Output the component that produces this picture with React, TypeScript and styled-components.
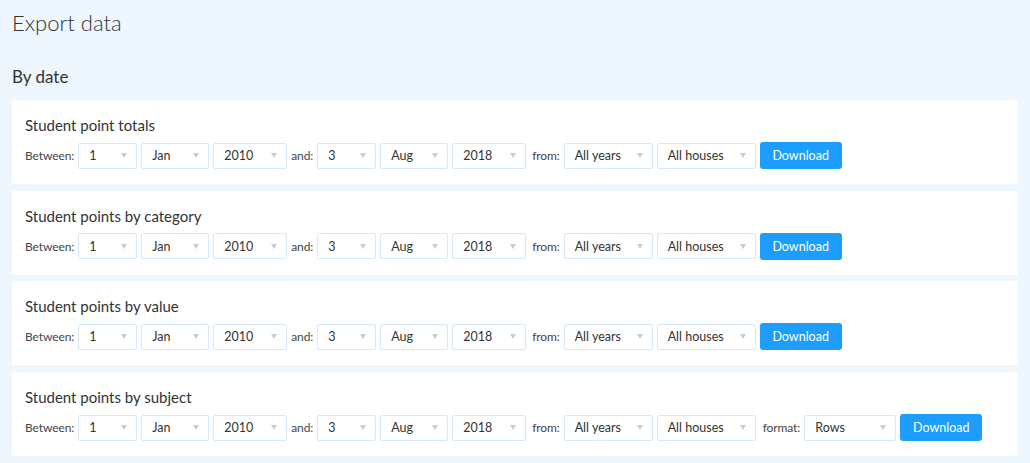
import React from "react"
import styled, { createGlobalStyle } from "styled-components"

const GlobalStyle = createGlobalStyle`
  html, body {
    margin: 0;
    padding: 0;
    background: #eef6fe;
    font-family: Lato, "Open Sans", sans-serif;
    color: #333;
  }
`

const Page = styled.div`
  padding: 8px 12px 12px 12px;
`

const Title = styled.h1`
  margin: 0;
  font-size: 22px;
  line-height: 30px;
  font-weight: 300;
  color: #333;
`

const Section = styled.h2`
  margin: 27px 0 11px 0;
  font-size: 17px;
  line-height: 24px;
  font-weight: 400;
  color: #333;
`

const Card = styled.div`
  background: #fff;
  padding: 15px 13px 15px 13px;
  margin-bottom: 6.7px;
  width: 1006px;
  box-sizing: border-box;
`

const CardTitle = styled.div`
  font-size: 15px;
  line-height: 20px;
  color: #333;
  margin-bottom: 7px;
`

const Row = styled.div`
  display: flex;
  align-items: center;
  gap: 4px;
  height: 27px;
`

const Label = styled.span<{ $space?: number }>`
  font-size: 12px;
  letter-spacing: -0.1px;
  color: #444;
  margin-left: ${(p) => p.$space ?? 0}px;
`

const SelectBox = styled.div<{ $w: number }>`
  display: flex;
  align-items: center;
  justify-content: space-between;
  width: ${(p) => p.$w}px;
  height: 26px;
  box-sizing: border-box;
  border: 1px solid #d7e8f8;
  border-radius: 2px;
  padding: 0 9px 0 10px;
  font-size: 12.5px;
  color: #333;
  background: #fff;
`

const Arrow = styled.span`
  width: 0;
  height: 0;
  border-left: 3px solid transparent;
  border-right: 3px solid transparent;
  border-top: 5px solid #cccccc;
`

const Button = styled.button`
  width: 82px;
  height: 27px;
  border: none;
  border-radius: 3px;
  background: #1d9efc;
  color: #fff;
  font-family: inherit;
  font-size: 12.5px;
  padding: 0;
`

function Select({ value, w }: { value: string; w: number }) {
  return (
    <SelectBox $w={w}>
      <span>{value}</span>
      <Arrow />
    </SelectBox>
  )
}

const reports = [
  "Student point totals",
  "Student points by category",
  "Student points by value",
  "Student points by subject",
]

export default function App() {
  return (
    <Page>
      <GlobalStyle />
      <Title>Export data</Title>
      <Section>By date</Section>
      {reports.map((name, i) => (
        <Card key={name}>
          <CardTitle>{name}</CardTitle>
          <Row>
            <Label>Between:</Label>
            <Select value="1" w={59} />
            <Select value="Jan" w={68} />
            <Select value="2010" w={74} />
            <Label>and:</Label>
            <Select value="3" w={59} />
            <Select value="Aug" w={68} />
            <Select value="2018" w={74} />
            <Label $space={2}>from:</Label>
            <Select value="All years" w={89} />
            <Select value="All houses" w={99} />
            {i === 3 && (
              <>
                <Label $space={3}>format:</Label>
                <Select value="Rows" w={92} />
              </>
            )}
            <Button>Download</Button>
          </Row>
        </Card>
      ))}
    </Page>
  )
}
